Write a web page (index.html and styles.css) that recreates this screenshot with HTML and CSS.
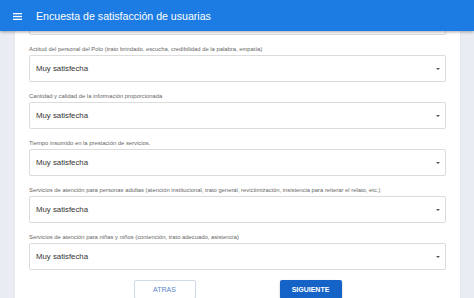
FILE: index.html
```html
<!DOCTYPE html>
<html lang="es">
<head>
    <meta charset="UTF-8">
    <meta name="viewport" content="width=device-width, initial-scale=1.0">
    <title>Encuesta de satisfacción de usuarias</title>
    <link rel="stylesheet" href="styles.css">
</head>
<body>
    <header class="header">
        <span class="menu-btn" aria-label="Menú">
            <svg viewBox="0 0 9 7" width="9" height="7">
                <rect x="0" y="0" width="9" height="1.3" fill="#fff"/>
                <rect x="0" y="2.85" width="9" height="1.3" fill="#fff"/>
                <rect x="0" y="5.7" width="9" height="1.3" fill="#fff"/>
            </svg>
        </span>
        <h1 class="title">Encuesta de satisfacción de usuarias</h1>
    </header>

    <main class="page">
        <div class="card">
            <!-- previous question, scrolled up under the header -->
            <div class="field">
                <div class="select"><i class="caret"></i></div>
            </div>
            <div class="field">
                <label class="label">Actitud del personal del Polo (trato brindado, escucha, credibilidad de la palabra, empatía)</label>
                <div class="select"><span>Muy satisfecha</span><i class="caret"></i></div>
            </div>
            <div class="field">
                <label class="label">Cantidad y calidad de la información proporcionada</label>
                <div class="select"><span>Muy satisfecha</span><i class="caret"></i></div>
            </div>
            <div class="field">
                <label class="label">Tiempo insumido en la prestación de servicios.</label>
                <div class="select"><span>Muy satisfecha</span><i class="caret"></i></div>
            </div>
            <div class="field">
                <label class="label">Servicios de atención para personas adultas (atención institucional, trato general, revictimización, insistencia para reiterar el relato, etc.)</label>
                <div class="select"><span>Muy satisfecha</span><i class="caret"></i></div>
            </div>
            <div class="field">
                <label class="label">Servicios de atención para niñas y niños (contención, trato adecuado, asistencia)</label>
                <div class="select"><span>Muy satisfecha</span><i class="caret"></i></div>
            </div>
            <div class="actions">
                <a href="#" class="button button-outline">ATRAS</a>
                <a href="#" class="button button-primary">SIGUIENTE</a>
            </div>
        </div>
    </main>
</body>
</html>
```

FILE: styles.css
```css
html, body {
    height: 100%;
}
body {
    margin: 0;
    font-family: "Liberation Sans", Arial, sans-serif;
    background: #e9edf3;
    color: #333;
    display: flex;
    flex-direction: column;
    overflow: hidden;
}
.header {
    position: relative;
    z-index: 2;
    height: 31px;
    flex: none;
    background: #1d7ce4;
    display: flex;
    align-items: center;
    padding: 0 0 0 13px;
    box-shadow: 0 1px 3px rgba(0,0,0,0.35);
}
.menu-btn {
    display: flex;
    width: 9px;
    height: 7px;
    margin-top: 1px;
}
.title {
    margin: 0 0 0 14px;
    font-size: 10.6px;
    font-weight: 500;
    color: #fff;
}
.page {
    flex: 1;
    overflow: hidden;
    padding: 0 14px 0 15px;
}
.card {
    background: #fff;
    margin-top: -23px;
    padding: 0 14px;
    box-shadow: 0 0 2px rgba(0,0,0,0.06);
}
.label {
    display: block;
    font-size: 5.85px;
    line-height: 8px;
    color: #666;
    padding: 10px 0 2px;
    white-space: nowrap;
}
.select {
    height: 27px;
    box-sizing: border-box;
    border: 1px solid #dcdcdc;
    border-radius: 2px;
    display: flex;
    align-items: center;
    justify-content: space-between;
    padding: 0 5px 0 6px;
    font-size: 7.8px;
    color: #333;
}
.caret {
    width: 0;
    height: 0;
    margin-left: auto;
    border-left: 2px solid transparent;
    border-right: 2px solid transparent;
    border-top: 2px solid #555;
}
.actions {
    display: flex;
    justify-content: center;
    gap: 84px;
    padding: 10px 0;
}
.button {
    display: inline-flex;
    align-items: center;
    justify-content: center;
    width: 62px;
    height: 19px;
    box-sizing: border-box;
    border-radius: 2px;
    font-size: 7px;
    text-decoration: none;
}
.button-outline {
    border: 1px solid #cfd9e8;
    color: #5a86c8;
    background: #fff;
}
.button-primary {
    background: #1563c6;
    color: #fff;
    font-weight: 700;
    box-shadow: 0 1px 2px rgba(0,0,0,0.3);
}
```
